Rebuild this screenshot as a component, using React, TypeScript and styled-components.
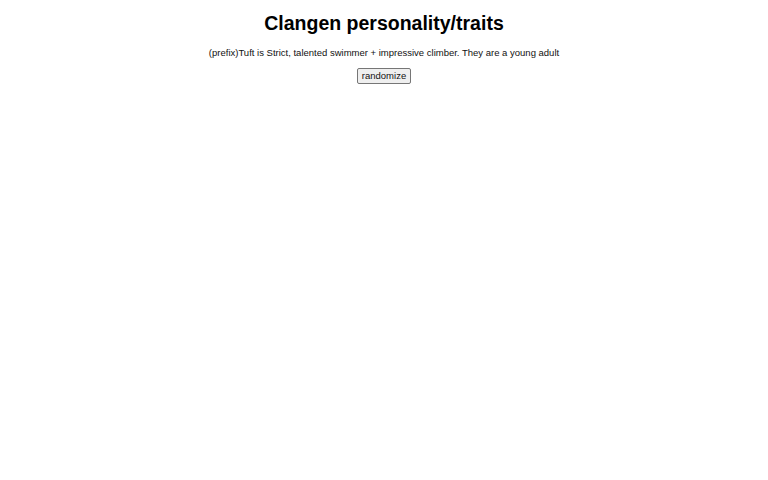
import * as React from 'react';
import styled, { createGlobalStyle } from 'styled-components';

const GlobalStyle = createGlobalStyle`
  body {
    margin: 0;
    background: white;
    font-family: "Liberation Sans", Arial, sans-serif;
    color: black;
  }
`;

function App() {
  return (
    <>
      <GlobalStyle />
      <Page>
        <Title>Clangen personality/traits</Title>
        <Description>
          (prefix)Tuft is Strict, talented swimmer + impressive climber. They are a young adult
        </Description>
        <Button type="button">randomize</Button>
      </Page>
    </>
  );
}

const Page = styled.main`
  display: flex;
  flex-direction: column;
  align-items: center;
  padding-top: 12px;
`;

const Title = styled.h1`
  margin: 0;
  font-size: 19.5px;
  font-weight: bold;
  line-height: 23px;
`;

const Description = styled.p`
  margin: 12px 0 0;
  font-size: 9.5px;
  line-height: 12px;
  color: #111;
`;

const Button = styled.button`
  margin-top: 9px;
  padding: 1px 4px;
  font-family: "Liberation Sans", Arial, sans-serif;
  font-size: 9.5px;
  line-height: 12px;
  color: #111;
  background: #efefef;
  border: 1px solid #767676;
  border-radius: 2px;
`;

export default App;
